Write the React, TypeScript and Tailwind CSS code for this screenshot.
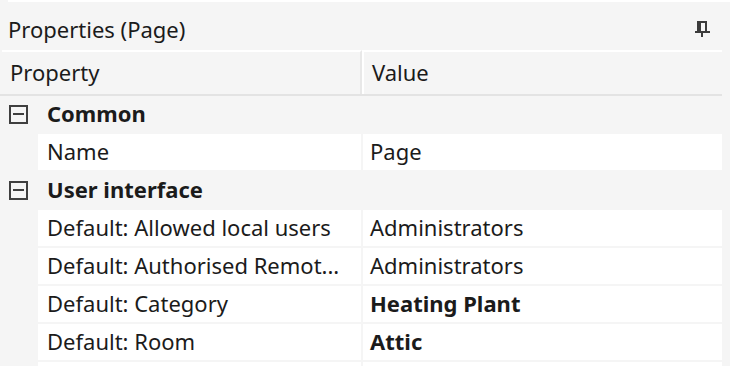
import React from "react";

type Row =
  | { kind: "group"; label: string }
  | { kind: "item"; name: string; value: string; bold?: boolean };

const rows: Row[] = [
  { kind: "group", label: "Common" },
  { kind: "item", name: "Name", value: "Page" },
  { kind: "group", label: "User interface" },
  { kind: "item", name: "Default: Allowed local users", value: "Administrators" },
  { kind: "item", name: "Default: Authorised Remot...", value: "Administrators" },
  { kind: "item", name: "Default: Category", value: "Heating Plant", bold: true },
  { kind: "item", name: "Default: Room", value: "Attic", bold: true },
  { kind: "item", name: "", value: "" },
];

function PinIcon() {
  return (
    <svg width="16" height="16" viewBox="0 0 16 16" className="shrink-0">
      <path d="M2 0h10v10h-2V2H6v8H2z" fill="#3c3c3c" />
      <rect x="0" y="10" width="15" height="2" fill="#3c3c3c" />
      <rect x="6" y="12" width="2" height="4" fill="#3c3c3c" />
    </svg>
  );
}

function CollapseBox() {
  return (
    <div className="w-[19px] h-[19px] border-2 border-[#3f3f3f] flex items-center justify-center">
      <div className="w-[11px] h-[2px] bg-[#3f3f3f]" />
    </div>
  );
}

export default function App() {
  return (
    <div className="w-[730px] h-[366px] overflow-hidden bg-[#f5f5f5] text-[#1b1b1b] font-['Noto_Sans',sans-serif] text-[22px] leading-none">
      {/* Title bar */}
      <div className="ml-[8px] h-[2px] bg-white" />
      <div className="h-[48px] flex items-center pl-[8px] pr-[19px]">
        <span className="flex-1 pt-[6px]">Properties (Page)</span>
        <div className="pt-[6px]">
          <PinIcon />
        </div>
      </div>

      {/* Column headers */}
      <div className="w-[722px] flex border-b-2 border-[#e3e3e3]">
        <div className="ml-[2px] w-[360px] h-[44px] border-t-2 border-white border-r-2 border-r-[#e8e8e8] flex items-center pl-[8px] pb-[2px]">
          Property
        </div>
        <div className="flex-1 h-[44px] border-t-2 border-l-2 border-white flex items-center pl-[8px] pb-[2px]">
          Value
        </div>
      </div>

      {/* Rows */}
      <div className="w-[722px] flex flex-col gap-[2px]">
        {rows.map((r, i) =>
          r.kind === "group" ? (
            <div key={i} className="h-[36px] flex items-center">
              <div className="w-[38px] pl-[9px] flex items-center">
                <CollapseBox />
              </div>
              <span className="pl-[9px] pb-[2px] font-bold">{r.label}</span>
            </div>
          ) : (
            <div key={i} className="h-[36px] flex">
              <div className="w-[38px] shrink-0" />
              <div className="w-[323px] shrink-0 bg-white flex items-center pl-[9px] pb-[2px] whitespace-nowrap overflow-hidden">
                {r.name}
              </div>
              <div className="ml-[2px] flex-1 bg-white flex items-center pl-[7px] pb-[2px]">
                <span className={r.bold ? "font-bold" : ""}>{r.value}</span>
              </div>
            </div>
          )
        )}
      </div>
    </div>
  );
}
